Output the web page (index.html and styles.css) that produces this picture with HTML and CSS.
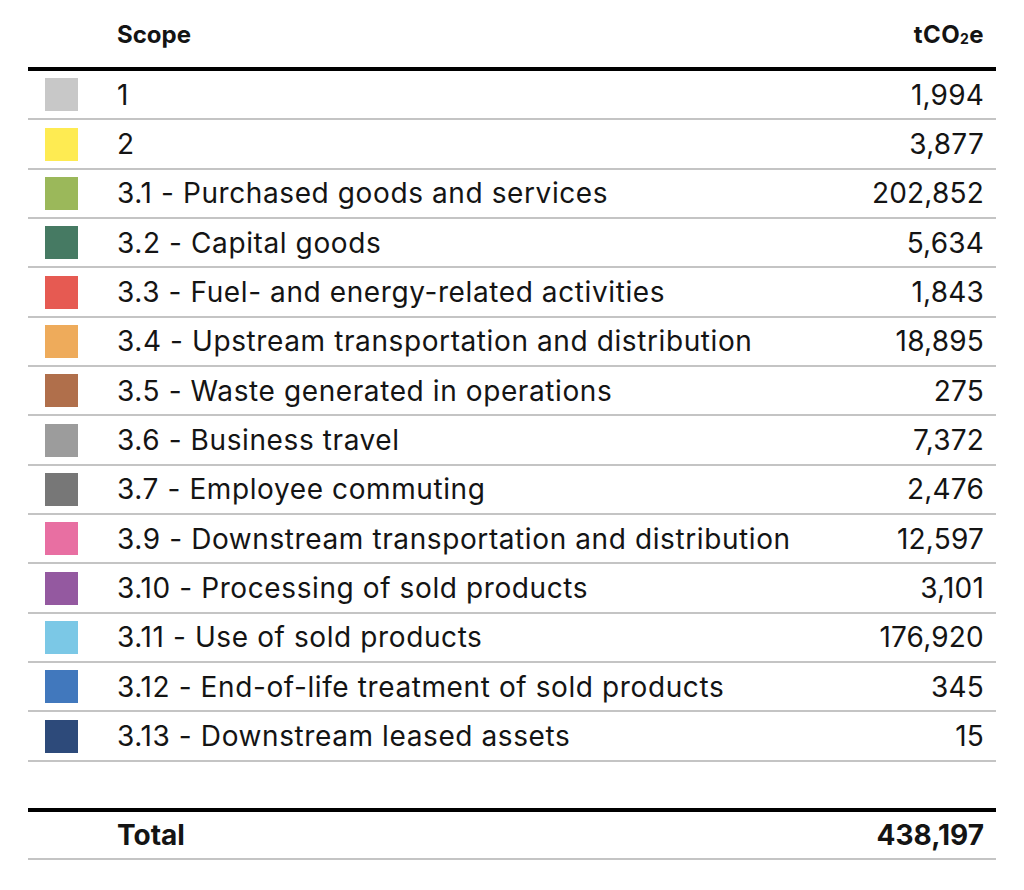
FILE: index.html
```html
<!DOCTYPE html>
<html lang="en">
<head>
<meta charset="utf-8">
<title>Emissions by scope</title>
<link rel="stylesheet" href="styles.css">
</head>
<body>
<div class="wrap">
  <div class="head">
    <span></span>
    <span class="h-scope">Scope</span>
    <span class="h-unit">tCO<sub>2</sub>e</span>
  </div>
  <div class="rows">
    <div class="row"><span class="sw c1"></span><span class="lbl">1</span><span class="num">1,994</span></div>
    <div class="row"><span class="sw c2"></span><span class="lbl">2</span><span class="num">3,877</span></div>
    <div class="row"><span class="sw c31"></span><span class="lbl">3.1 - Purchased goods and services</span><span class="num">202,852</span></div>
    <div class="row"><span class="sw c32"></span><span class="lbl">3.2 - Capital goods</span><span class="num">5,634</span></div>
    <div class="row"><span class="sw c33"></span><span class="lbl">3.3 - Fuel- and energy-related activities</span><span class="num">1,843</span></div>
    <div class="row"><span class="sw c34"></span><span class="lbl">3.4 - Upstream transportation and distribution</span><span class="num">18,895</span></div>
    <div class="row"><span class="sw c35"></span><span class="lbl">3.5 - Waste generated in operations</span><span class="num">275</span></div>
    <div class="row"><span class="sw c36"></span><span class="lbl">3.6 - Business travel</span><span class="num">7,372</span></div>
    <div class="row"><span class="sw c37"></span><span class="lbl">3.7 - Employee commuting</span><span class="num">2,476</span></div>
    <div class="row"><span class="sw c39"></span><span class="lbl">3.9 - Downstream transportation and distribution</span><span class="num">12,597</span></div>
    <div class="row"><span class="sw c310"></span><span class="lbl">3.10 - Processing of sold products</span><span class="num">3,101</span></div>
    <div class="row"><span class="sw c311"></span><span class="lbl">3.11 - Use of sold products</span><span class="num">176,920</span></div>
    <div class="row"><span class="sw c312"></span><span class="lbl">3.12 - End-of-life treatment of sold products</span><span class="num">345</span></div>
    <div class="row"><span class="sw c313"></span><span class="lbl">3.13 - Downstream leased assets</span><span class="num">15</span></div>
  </div>
  <div class="total">
    <span></span>
    <span class="t-lbl">Total</span>
    <span class="t-num">438,197</span>
  </div>
</div>
</body>
</html>
```

FILE: styles.css
```css
html, body {
  margin: 0;
  padding: 0;
  background: #ffffff;
}
body {
  font-family: Inter, "Noto Sans", sans-serif;
  color: #141414;
}
.wrap {
  width: 968px;
  margin-left: 28px;
}
.head,
.row,
.total {
  display: grid;
  grid-template-columns: 89px 1fr auto;
  align-items: center;
  padding-right: 12px;
}
.head {
  border-bottom: 4px solid #000;
  box-sizing: border-box;
  height: 71px;
  font-weight: 700;
  font-size: 24px;
}
.h-scope { padding-top: 2px; }
.h-unit {
  padding-top: 2px;
  letter-spacing: 0.4px;
}
.h-unit sub {
  font-size: 14px;
  vertical-align: -1px;
}
.row {
  height: 49.35px;
  box-sizing: border-box;
  border-bottom: 2px solid #c4c4c4;
  font-size: 28px;
  font-weight: 400;
}
.lbl { letter-spacing: 0.6px; }
.num { letter-spacing: 0.2px; }
.sw {
  width: 33px;
  height: 33px;
  margin-left: 17px;
}
.c1 { background: #c8c8c8; }
.c2 { background: #feeb52; }
.c31 { background: #9bb85a; }
.c32 { background: #467a63; }
.c33 { background: #e65a52; }
.c34 { background: #eeab5b; }
.c35 { background: #b06f4b; }
.c36 { background: #9c9c9c; }
.c37 { background: #777777; }
.c39 { background: #e86fa2; }
.c310 { background: #9459a0; }
.c311 { background: #7bc8e6; }
.c312 { background: #4178bd; }
.c313 { background: #2d4a7a; }
.total {
  margin-top: 46px;
  border-top: 4px solid #000;
  border-bottom: 2px solid #c4c4c4;
  height: 52px;
  box-sizing: border-box;
  font-size: 28px;
  font-weight: 700;
}
```
